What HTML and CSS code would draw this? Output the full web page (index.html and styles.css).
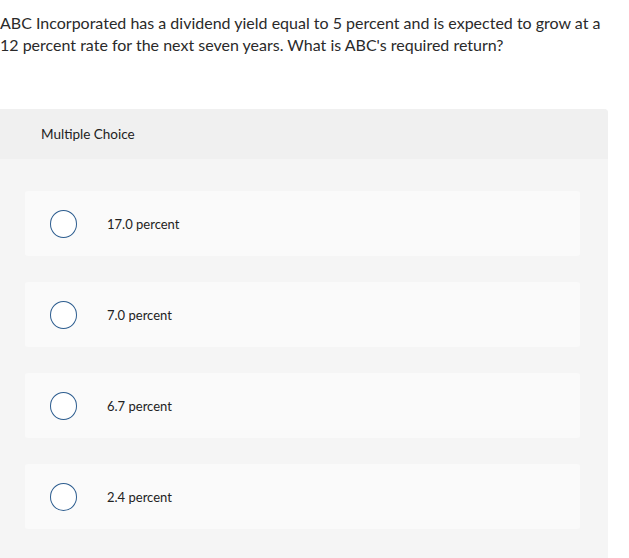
FILE: index.html
```html
<!DOCTYPE html>
<html>
<head>
<meta charset="utf-8">
<link rel="stylesheet" href="styles.css">
</head>
<body>
<div class="question">ABC Incorporated has a dividend yield equal to 5 percent and is expected to grow at a 12 percent rate for the next seven years. What is ABC's required return?</div>
<div class="panel">
  <div class="panel-head">Multiple Choice</div>
  <div class="options">
    <div class="option"><span class="radio"></span><span class="label">17.0 percent</span></div>
    <div class="option"><span class="radio"></span><span class="label">7.0 percent</span></div>
    <div class="option"><span class="radio"></span><span class="label">6.7 percent</span></div>
    <div class="option"><span class="radio"></span><span class="label">2.4 percent</span></div>
  </div>
</div>
</body>
</html>
```
FILE: styles.css
```css
html, body { margin: 0; padding: 0; background: #fff; }
body { font-family: Lato, "Open Sans", sans-serif; color: #222; }
.question {
  width: 606px;
  margin-top: 12px;
  font-size: 16px;
  line-height: 22px;
  color: #2a2a2a;
}
.panel {
  margin-top: 53px;
  width: 608px;
  background: #f5f5f5;
  border-top-right-radius: 4px;
  padding-bottom: 40px;
}
.panel-head {
  height: 50px;
  box-sizing: border-box;
  padding-left: 41px;
  display: flex;
  align-items: center;
  background: #f0f0f0;
  border-top-right-radius: 4px;
  font-size: 13.5px;
  color: #222;
}
.options {
  display: flex;
  flex-direction: column;
  gap: 26px;
  padding: 32px 28px 0 25px;
}
.option {
  height: 65px;
  background: #fafafa;
  border-radius: 3px;
  display: flex;
  align-items: center;
}
.radio {
  width: 25px;
  height: 26px;
  border: 1.5px solid #2d5d8f;
  border-radius: 50%;
  margin-left: 25px;
  background: #fff;
  flex: none;
}
.label {
  margin-left: 30px;
  font-size: 13px;
  color: #222;
}
```
